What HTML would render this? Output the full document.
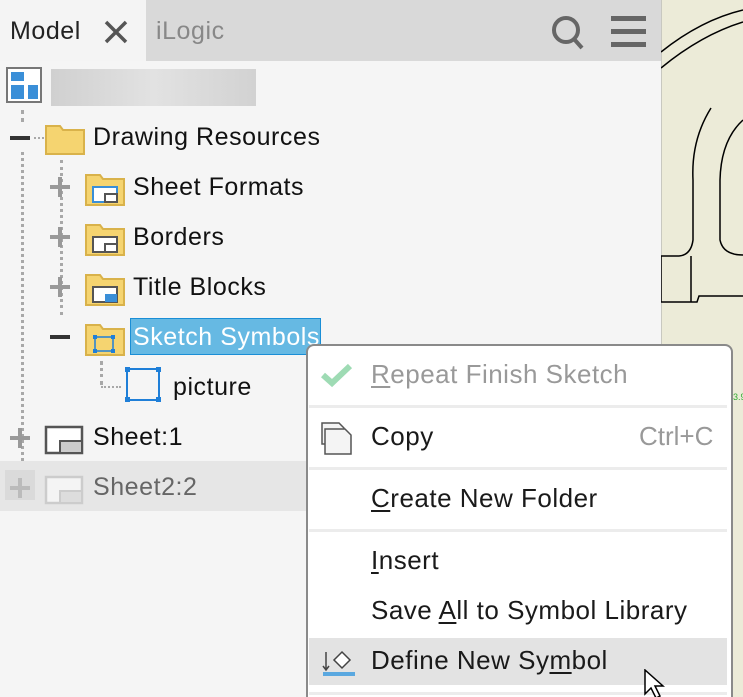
<!DOCTYPE html>
<html><head><style>
html,body{margin:0;width:743px;height:697px;overflow:hidden}
body{background:#f5f5f5;font-family:"Liberation Sans",sans-serif;position:relative}
.a{position:absolute}
.t{position:absolute;font-size:25px;letter-spacing:0.55px;color:#111;white-space:nowrap;line-height:30px}
.dv{position:absolute;border-left:3px dotted #a8a8a8;width:0}
.dh{position:absolute;border-top:2px dotted #a8a8a8;height:0}
.mi{position:absolute;left:371px;font-size:26px;letter-spacing:0.5px;color:#1a1a1a;white-space:nowrap;line-height:30px}
u{text-decoration-thickness:2px;text-underline-offset:3px}
.sep{position:absolute;left:309px;width:418px;height:3px;background:#ececec}
</style></head><body>
<div class="a" style="left:0;top:0;width:661px;height:61px;background:#d9d9d9"></div>
<div class="a" style="left:0;top:0;width:146px;height:61px;background:#f4f4f4"></div>
<div class="t" style="left:10px;top:16px;color:#222">Model</div>
<svg class="a" style="left:104px;top:20px" width="24" height="24"><path d="M2 2L22 22M22 2L2 22" stroke="#555" stroke-width="3.5"/></svg>
<div class="t" style="left:156px;top:16px;color:#888">iLogic</div>
<svg class="a" style="left:546px;top:12px" width="44" height="40"><circle cx="20" cy="18" r="12" fill="none" stroke="#666" stroke-width="4"/><path d="M28 27L36 36" stroke="#666" stroke-width="4"/></svg>
<div class="a" style="left:611px;top:16px;width:35px;height:5px;background:#666;box-shadow:0 13px 0 #666,0 26px 0 #666"></div>
<!-- canvas -->
<div class="a" style="left:661px;top:0;width:82px;height:697px;background:#ecebd8;border-left:1px solid #c8c8c0"></div>
<svg class="a" style="left:661px;top:0" width="82" height="350"><g fill="none" stroke="#000" stroke-width="1.5"><path d="M0 52Q40 20 82 10M0 68Q40 35 82 22"/><path d="M50 108Q30 140 32 180L32 240Q30 255 18 256L0 256M82 120Q60 140 59 180L59 240Q62 255 82 255"/><path d="M0 256L0 302M30 256L30 302M0 302L36 302L38 296L82 296"/></g></svg>
<div class="a" style="left:733px;top:392px;font-size:9px;color:#3a3">3.9</div>
<!-- tree -->
<div class="a" style="left:6px;top:67px;width:36px;height:36px;border:2px solid #777;box-sizing:border-box;background:#fff"></div>
<div class="a" style="left:11px;top:72px;width:13px;height:9px;background:#3a8fd8"></div>
<div class="a" style="left:11px;top:85px;width:13px;height:14px;background:#3a8fd8"></div>
<div class="a" style="left:28px;top:85px;width:10px;height:14px;background:#3a8fd8"></div>
<div class="a" style="left:51px;top:69px;width:205px;height:37px;background:linear-gradient(90deg,#d0d0d0,#e2e2e2,#d2d2d2)"></div>
<div class="dv" style="left:21px;top:110px;height:12px"></div>
<div class="dv" style="left:21px;top:152px;height:315px"></div>
<div class="dv" style="left:60px;top:160px;height:155px"></div>
<div class="a" style="left:10px;top:136px;width:20px;height:4px;background:#333"></div>
<div class="dh" style="left:34px;top:137px;width:10px"></div>
<svg class="a" style="left:45px;top:120px" width="40" height="35"><path d="M1 6h14l3 4h21v24H1z" fill="#f5d470" stroke="#d9b24a" stroke-width="2"/></svg>
<div class="t" style="left:93px;top:122px">Drawing Resources</div>
<svg class="a" style="left:50px;top:170px" width="84" height="190">
<g fill="#999"><rect x="0" y="15" width="20" height="4"/><rect x="8" y="7" width="4" height="20"/><rect x="0" y="65" width="20" height="4"/><rect x="8" y="57" width="4" height="20"/><rect x="0" y="115" width="20" height="4"/><rect x="8" y="107" width="4" height="20"/></g>
<rect x="0" y="165" width="20" height="4" fill="#333"/>
<g fill="#f5d470" stroke="#d9b24a" stroke-width="2"><path d="M36 5h14l3 4h21v26H36z"/><path d="M36 55h14l3 4h21v26H36z"/><path d="M36 105h14l3 4h21v26H36z"/><path d="M36 155h14l3 4h21v26H36z"/></g>
<rect x="43" y="17" width="24" height="15" fill="#fff" stroke="#3a8fd8" stroke-width="2"/><rect x="55" y="24" width="12" height="8" fill="none" stroke="#555" stroke-width="2"/>
<rect x="43" y="67" width="24" height="15" fill="#fff" stroke="#555" stroke-width="2"/><rect x="55" y="74" width="12" height="8" fill="none" stroke="#555" stroke-width="2"/>
<rect x="43" y="117" width="24" height="15" fill="#fff" stroke="#555" stroke-width="2"/><rect x="55" y="124" width="12" height="8" fill="#3a8fd8"/>
<rect x="45" y="167" width="18" height="14" fill="none" stroke="#1f7fd8" stroke-width="1.5"/><g fill="#1f7fd8"><rect x="43" y="165" width="4" height="4"/><rect x="61" y="165" width="4" height="4"/><rect x="43" y="179" width="4" height="4"/><rect x="61" y="179" width="4" height="4"/></g>
</svg>
<div class="t" style="left:133px;top:172px">Sheet Formats</div>
<div class="t" style="left:133px;top:222px">Borders</div>
<div class="t" style="left:133px;top:272px">Title Blocks</div>
<div class="a" style="left:130px;top:318px;width:189px;height:35px;background:#66b9e3;border:1px solid #1a8ed6"></div>
<div class="t" style="left:133px;top:322px;color:#fff">Sketch Symbols</div>
<div class="dv" style="left:100px;top:361px;height:24px"></div>
<div class="dh" style="left:101px;top:386px;width:20px"></div>
<svg class="a" style="left:124px;top:366px" width="38" height="38"><rect x="3" y="3" width="32" height="31" fill="none" stroke="#1f7fd8" stroke-width="2"/><g fill="#1f7fd8"><rect x="1" y="1" width="5" height="5"/><rect x="32" y="1" width="5" height="5"/><rect x="1" y="31" width="5" height="5"/><rect x="32" y="31" width="5" height="5"/></g></svg>
<div class="t" style="left:173px;top:372px">picture</div>
<div class="a" style="left:0;top:461px;width:307px;height:50px;background:#e6e6e6"></div>
<div class="a" style="left:5px;top:470px;width:30px;height:30px;background:#dadada"></div>
<svg class="a" style="left:8px;top:425px" width="80" height="80">
<g fill="#999"><rect x="2" y="11" width="20" height="4"/><rect x="10" y="3" width="4" height="20"/></g>
<g fill="#bbb"><rect x="2" y="61" width="20" height="4"/><rect x="10" y="53" width="4" height="20"/></g>
<rect x="38" y="2" width="36" height="26" fill="#fff" stroke="#555" stroke-width="2.5"/><rect x="52" y="16" width="22" height="12" fill="#ccc" stroke="#555" stroke-width="2"/>
<rect x="38" y="52" width="36" height="26" fill="#f4f4f4" stroke="#ccc" stroke-width="2.5"/><rect x="52" y="66" width="22" height="12" fill="#ddd" stroke="#ccc" stroke-width="2"/>
</svg>
<div class="t" style="left:93px;top:422px">Sheet:1</div>
<div class="t" style="left:93px;top:472px;color:#666">Sheet2:2</div>
<!-- menu -->
<div class="a" style="left:306px;top:344px;width:427px;height:370px;background:#fff;border:2px solid #8a8a8a;border-radius:8px;box-sizing:border-box"></div>
<div class="sep" style="top:405px"></div>
<div class="sep" style="top:467px"></div>
<div class="sep" style="top:529px"></div>
<div class="sep" style="top:692px"></div>
<div class="a" style="left:309px;top:638px;width:418px;height:47px;background:#e3e3e3"></div>
<svg class="a" style="left:320px;top:362px" width="36" height="26"><path d="M3 13L12 21L30 4" fill="none" stroke="#9edbb4" stroke-width="6"/></svg>
<div class="mi" style="top:359px;color:#999"><u>R</u>epeat Finish Sketch</div>
<svg class="a" style="left:320px;top:421px" width="36" height="36"><path d="M2 2h17l5 5v16H2z" fill="#f4f4f4" stroke="#555" stroke-width="1.5"/><path d="M5 8h20l6 6v19H5z" fill="#f4f4f4" stroke="#555" stroke-width="1.5"/></svg>
<div class="mi" style="top:421px">Copy</div>
<div class="a" style="left:639px;top:421px;font-size:26px;line-height:30px;color:#999">Ctrl+C</div>
<div class="mi" style="top:483px"><u>C</u>reate New Folder</div>
<div class="mi" style="top:545px"><u>I</u>nsert</div>
<div class="mi" style="top:595px">Save <u>A</u>ll to Symbol Library</div>
<svg class="a" style="left:322px;top:650px" width="34" height="26"><path d="M4 2v18M1 16l3 4 3-4" fill="none" stroke="#444" stroke-width="1.5"/><path d="M20 2l8 8-8 8-8-8z" fill="#fff" stroke="#444" stroke-width="1.5"/><rect x="1" y="22" width="32" height="4" fill="#5aa8e0"/></svg>
<div class="mi" style="top:645px">Define New Sy<u>m</u>bol</div>
<svg class="a" style="left:644px;top:669px" width="26" height="30"><path d="M1 1v24l6-6 5 10 4-2-5-10h8z" fill="#fff" stroke="#000" stroke-width="1.5"/></svg>
</body></html>
